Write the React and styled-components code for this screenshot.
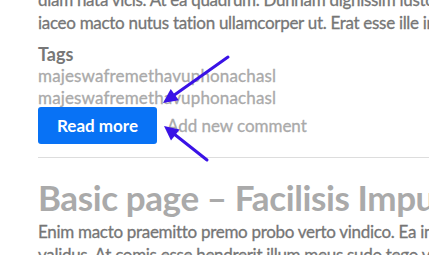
import React from "react";
import styled, { createGlobalStyle } from "styled-components";

const Global = createGlobalStyle`
  html, body { margin: 0; padding: 0; background: #fff; overflow: hidden; }
  body { font-family: Lato, "Open Sans", sans-serif; }
`;

const Viewport = styled.div`
  position: relative;
  width: 429px;
  height: 255px;
  overflow: hidden;
`;

const Article = styled.div`
  margin-top: -12px;
  padding-left: 38px;
  display: flex;
  flex-direction: column;
`;

const Text = styled.p`
  margin: ${(p) => (p.$gap ? `${p.$gap}px` : 0)} 0 0;
  font-size: 17px;
  letter-spacing: -0.3px;
  -webkit-text-stroke: 0.3px currentColor;
  line-height: 23px;
  color: #767676;
  white-space: nowrap;
  span { display: block; }
`;

const Tags = styled.div`
  margin-top: 9px;
  display: flex;
  flex-direction: column;
`;

const TagsLabel = styled.div`
  font-size: 18px;
  font-weight: 700;
  color: #777;
  line-height: 22px;
`;

const TagLink = styled.a`
  font-size: 17px;
  letter-spacing: 0.15px;
  -webkit-text-stroke: 0.3px currentColor;
  line-height: 22px;
  color: #aaa;
  text-decoration: none;
`;

const Links = styled.div`
  display: flex;
  align-items: center;
  gap: 10px;
  margin-top: -2px;
`;

const Button = styled.a`
  display: flex;
  align-items: center;
  justify-content: center;
  width: 119px;
  height: 37px;
  background: #0872f5;
  border-radius: 3px;
  color: #fff;
  font-weight: 700;
  font-size: 17px;
  text-decoration: none;
`;

const Comment = styled.a`
  font-size: 17px;
  letter-spacing: -0.05px;
  -webkit-text-stroke: 0.3px currentColor;
  color: #aaa;
  text-decoration: none;
`;

const Rule = styled.hr`
  margin: 13px 0 0;
  border: 0;
  border-top: 1px solid #ddd;
`;

const Title = styled.h2`
  margin: 19px 0 0;
  font-size: 35px;
  line-height: 40px;
  letter-spacing: -0.4px;
  font-weight: 700;
  color: #aaa;
  white-space: nowrap;
`;

const Arrows = styled.svg`
  position: absolute;
  left: 0;
  top: 0;
  pointer-events: none;
`;

function Arrow({ x1, y1, x2, y2 }) {
  const a = Math.atan2(y2 - y1, x2 - x1);
  const len = 16;
  const spread = 0.45;
  const p1 = [x2 - len * Math.cos(a - spread), y2 - len * Math.sin(a - spread)];
  const p2 = [x2 - len * Math.cos(a + spread), y2 - len * Math.sin(a + spread)];
  const bx = x2 - 10 * Math.cos(a);
  const by = y2 - 10 * Math.sin(a);
  return (
    <g>
      <line x1={x1} y1={y1} x2={bx} y2={by} stroke="#3a12e6" strokeWidth="3" strokeLinecap="round" />
      <polygon points={`${x2},${y2} ${p1[0]},${p1[1]} ${p2[0]},${p2[1]}`} fill="#3a12e6" />
    </g>
  );
}

export default function App() {
  return (
    <>
      <Global />
      <Viewport>
        <Article>
          <Text>
            <span>diam nata vicis. At ea quadrum. Dunnam dignissim iusto</span>
            <span>iaceo macto nutus tation ullamcorper ut. Erat esse ille in</span>
          </Text>
          <Tags>
            <TagsLabel>Tags</TagsLabel>
            <TagLink href="#">majeswafremethavuphonachasl</TagLink>
            <TagLink href="#">majeswafremethavuphonachasl</TagLink>
          </Tags>
          <Links>
            <Button href="#">Read more</Button>
            <Comment href="#">Add new comment</Comment>
          </Links>
          <Rule />
          <Title>Basic page – Facilisis Imputo</Title>
          <Text $gap={3}>
            <span>Enim macto praemitto premo probo verto vindico. Ea in</span>
            <span>validus. At comis esse hendrerit illum meus sudo tego vicis</span>
          </Text>
        </Article>
        <Arrows width="429" height="255">
          <Arrow x1={228} y1={57} x2={163} y2={103} />
          <Arrow x1={207} y1={160} x2={164} y2={126} />
        </Arrows>
      </Viewport>
    </>
  );
}
